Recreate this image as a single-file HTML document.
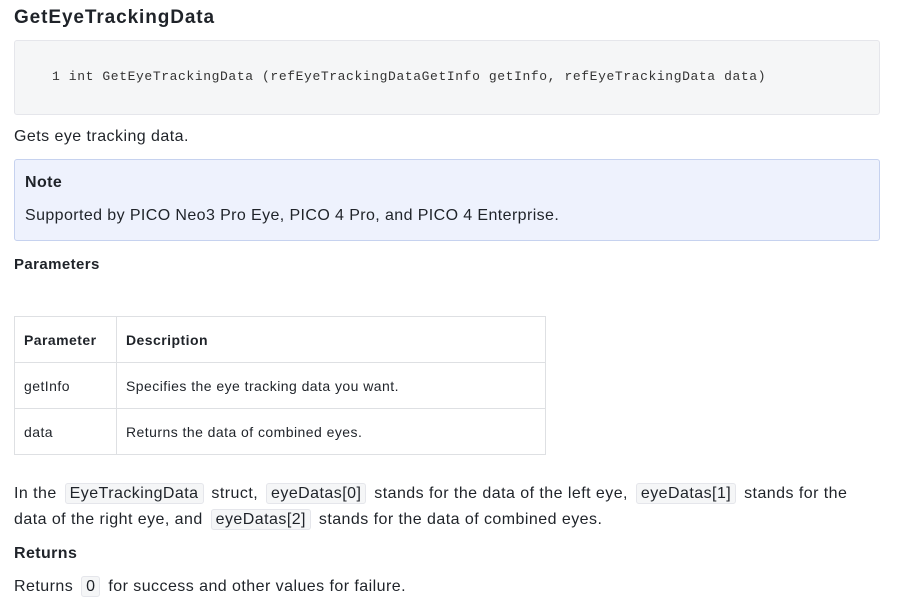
<!DOCTYPE html>
<html><head><meta charset="utf-8"><style>
body{margin:0;width:907px;height:604px;background:#fff;font-family:"Liberation Sans",sans-serif;color:#1f2329;position:relative;overflow:hidden;letter-spacing:0.4px}
.a{position:absolute;white-space:nowrap}
code{background:#f5f6f7;border:1px solid #e5e6eb;border-radius:3px;padding:1px 4px;margin:0 3px;font-family:"Liberation Sans",sans-serif}
td{border:1px solid #dee0e3;padding:0 9px;font-size:14px;height:45px;letter-spacing:0.45px}
</style></head><body>
<div class="a" style="left:14px;top:7px;font-size:19px;font-weight:bold;letter-spacing:0.9px">GetEyeTrackingData</div>
<div class="a" style="left:14px;top:40px;width:864px;height:73px;background:#f5f6f7;border:1px solid #e5e6eb;border-radius:3px"></div>
<div class="a" style="left:52px;top:69px;font-family:'Liberation Mono',monospace;font-size:13px;color:#333;letter-spacing:0.6px">1 int GetEyeTrackingData (refEyeTrackingDataGetInfo getInfo, refEyeTrackingData data)</div>
<div class="a" style="left:14px;top:128px;font-size:16px;letter-spacing:0.45px">Gets eye tracking data.</div>
<div class="a" style="left:14px;top:159px;width:864px;height:80px;background:#eef2fd;border:1px solid #c6d2ef;border-radius:3px"></div>
<div class="a" style="left:25px;top:174px;font-size:16px;font-weight:bold">Note</div>
<div class="a" style="left:25px;top:207px;font-size:16px;letter-spacing:0.4px">Supported by PICO Neo3 Pro Eye, PICO 4 Pro, and PICO 4 Enterprise.</div>
<div class="a" style="left:14px;top:256px;font-size:15px;font-weight:bold">Parameters</div>
<table class="a" style="left:14px;top:316px;width:532px;border-collapse:collapse">
<tr><td style="width:83px;font-weight:bold">Parameter</td><td style="font-weight:bold">Description</td></tr>
<tr><td>getInfo</td><td>Specifies the eye tracking data you want.</td></tr>
<tr><td>data</td><td>Returns the data of combined eyes.</td></tr>
</table>
<div class="a" style="left:14px;top:485px;font-size:16px;letter-spacing:0.45px">In the <code>EyeTrackingData</code> struct, <code>eyeDatas[0]</code> stands for the data of the left eye, <code>eyeDatas[1]</code> stands for the</div>
<div class="a" style="left:14px;top:511px;font-size:16px;letter-spacing:0.45px">data of the right eye, and <code>eyeDatas[2]</code> stands for the data of combined eyes.</div>
<div class="a" style="left:14px;top:545px;font-size:16px;font-weight:bold">Returns</div>
<div class="a" style="left:14px;top:578px;font-size:16px;letter-spacing:0.45px">Returns <code>0</code> for success and other values for failure.</div>
</body></html>
